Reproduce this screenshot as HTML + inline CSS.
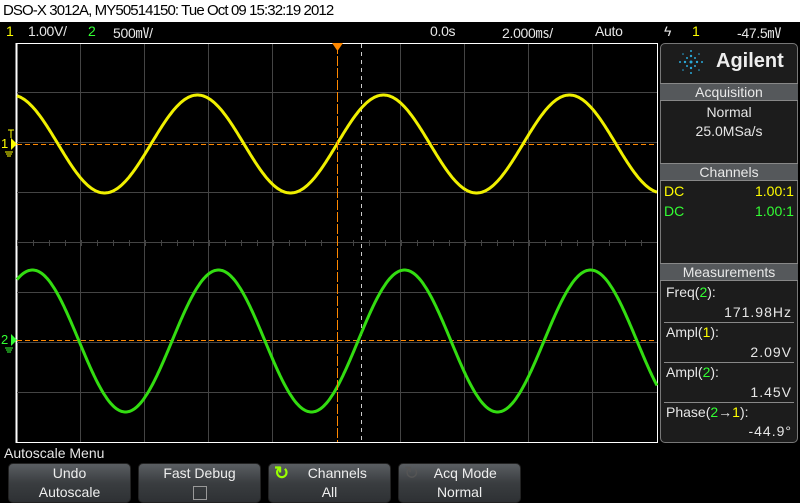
<!DOCTYPE html>
<html><head><meta charset="utf-8"><style>
*{margin:0;padding:0;box-sizing:border-box}
body{width:800px;height:503px;background:#000;position:relative;overflow:hidden;font-family:"Liberation Sans",sans-serif;color:#e6e6e6}
.a{position:absolute;white-space:nowrap}
#hdr{left:0;top:0;width:800px;height:22px;background:#fff;color:#000;font-size:15px;padding:2px 3px;letter-spacing:-0.9px}
.st{font-size:14px;top:23px;letter-spacing:-0.3px}
.panel{position:absolute;left:660px;width:138px;background:#1c1c1c;border:1px solid #777;border-radius:5px}
.ph{position:absolute;left:0;width:100%;height:18px;background:#55585b;border-top:1px solid #888;border-bottom:1px solid #888;text-align:center;font-size:14px;line-height:16px;color:#e8e8e8}
.btn{position:absolute;top:463px;height:40px;width:123px;border-radius:5px;background:linear-gradient(#5a5e62,#3a3d40 50%,#2e3134);border:1px solid #222;text-align:center;font-size:14px;line-height:19px;color:#eee}
.mt{position:absolute;left:6px;font-size:14px}
.mv{position:absolute;right:6px;font-size:14px;letter-spacing:1px}
.sep{position:absolute;left:4px;right:4px;height:1px;background:#888}
</style></head><body>
<div id="hdr" class="a">DSO-X 3012A, MY50514150: Tue Oct 09 15:32:19 2012</div>
<div class="a st" style="left:6px;color:#ff0">1</div>
<div class="a st" style="left:28px">1.00V/</div>
<div class="a st" style="left:88px;color:#3f3">2</div>
<div class="a st" style="left:113px">500㎷/</div>
<div class="a st" style="left:430px">0.0s</div>
<div class="a st" style="left:502px">2.000㎳/</div>
<div class="a st" style="left:595px">Auto</div>
<div class="a st" style="left:664px">ϟ</div>
<div class="a st" style="left:692px;color:#ff0">1</div>
<div class="a st" style="left:737px">-47.5㎷</div>

<svg class="a" style="left:0;top:0" width="800" height="503" id="sv">
<line x1="16.5" y1="43" x2="16.5" y2="443" stroke="#fff" stroke-width="2"/>
<line x1="16" y1="43.5" x2="658" y2="43.5" stroke="#fff"/>
<line x1="16" y1="442.5" x2="658" y2="442.5" stroke="#fff"/>
<line x1="657.5" y1="43" x2="657.5" y2="443" stroke="#fff"/>
<g id="grid" stroke="#444" stroke-width="1"></g>
<line x1="17" y1="144.5" x2="657" y2="144.5" stroke="#f80" stroke-dasharray="5,3"/>
<line x1="17" y1="340.5" x2="657" y2="340.5" stroke="#f80" stroke-dasharray="5,3"/>
<line x1="361.5" y1="44" x2="361.5" y2="442" stroke="#ccc" stroke-dasharray="4,4"/>
<path id="y" fill="none" stroke="#f0f000" stroke-width="3"/>
<path id="g" fill="none" stroke="#33dd11" stroke-width="3"/>
<line x1="337.5" y1="44" x2="337.5" y2="442" stroke="#f80" stroke-dasharray="10,2"/>
<polygon points="332,43 343,43 337.5,51" fill="#f80"/>
<text x="1" y="148" fill="#ff0" font-size="13" font-family="Liberation Sans">1</text>
<polygon points="11,138 17,144 11,150" fill="#ff0"/>
<path d="M8,130h6M11,130v8" stroke="#ff0"/>
<text x="1" y="344" fill="#3f3" font-size="13" font-family="Liberation Sans">2</text>
<polygon points="11,334 17,340 11,346" fill="#3f3"/>
<path d="M5,152h8M6,154h6M7,156h4" stroke="#ff0"/>
<path d="M5,348h8M6,350h6M7,352h4" stroke="#3f3"/>
<g fill="#2aa8d8">
<circle cx="691" cy="62" r="1.5"/><circle cx="691" cy="55" r="1.2"/><circle cx="691" cy="69" r="1.2"/><circle cx="691" cy="51" r="1"/><circle cx="691" cy="73" r="1"/>
<circle cx="684" cy="62" r="1.2"/><circle cx="698" cy="62" r="1.2"/><circle cx="680" cy="62" r="1"/><circle cx="702" cy="62" r="1"/>
<circle cx="686" cy="57" r="1"/><circle cx="696" cy="57" r="1"/><circle cx="686" cy="67" r="1"/><circle cx="696" cy="67" r="1"/>
<circle cx="683" cy="54" r="0.8"/><circle cx="699" cy="54" r="0.8"/><circle cx="683" cy="70" r="0.8"/><circle cx="699" cy="70" r="0.8"/>
</g>
</svg>

<div class="panel" style="top:43px;height:400px"></div>
<svg class="a" style="left:0;top:0" width="800" height="503">
<g fill="#2aa8d8">
<circle cx="691" cy="62" r="1.5"/><circle cx="691" cy="56" r="1.2"/><circle cx="691" cy="68" r="1.2"/><circle cx="691" cy="51" r="1"/><circle cx="691" cy="73" r="1"/>
<circle cx="685" cy="62" r="1.2"/><circle cx="697" cy="62" r="1.2"/><circle cx="680" cy="62" r="1"/><circle cx="702" cy="62" r="1"/>
<circle cx="687" cy="58" r="1"/><circle cx="695" cy="58" r="1"/><circle cx="687" cy="66" r="1"/><circle cx="695" cy="66" r="1"/>
<circle cx="683" cy="54" r="0.8"/><circle cx="699" cy="54" r="0.8"/><circle cx="683" cy="70" r="0.8"/><circle cx="699" cy="70" r="0.8"/>
</g></svg>
<div class="a" style="left:716px;top:50px;font-size:20px;font-weight:bold;color:#eee">Agilent</div>
<div class="ph" style="left:660px;top:83px;width:138px;position:absolute">Acquisition</div>
<div class="a" style="left:660px;width:138px;text-align:center;top:104px;font-size:14px">Normal</div>
<div class="a" style="left:660px;width:138px;text-align:center;top:123px;font-size:14px">25.0MSa/s</div>
<div class="ph" style="left:660px;top:163px;width:138px;position:absolute">Channels</div>
<div class="a" style="left:664px;top:183px;font-size:14px;color:#ff0">DC</div>
<div class="a" style="left:755px;top:183px;font-size:14px;color:#ff0">1.00:1</div>
<div class="a" style="left:664px;top:203px;font-size:14px;color:#3f3">DC</div>
<div class="a" style="left:755px;top:203px;font-size:14px;color:#3f3">1.00:1</div>
<div class="ph" style="left:660px;top:263px;width:138px;position:absolute">Measurements</div>
<div style="position:absolute;left:660px;top:282px;width:138px;height:160px">
<div class="mt" style="top:2px">Freq(<span style="color:#3f3">2</span>):</div>
<div class="mv" style="top:22px">171.98Hz</div><div class="sep" style="top:40px"></div>
<div class="mt" style="top:42px">Ampl(<span style="color:#ff0">1</span>):</div>
<div class="mv" style="top:62px">2.09V</div><div class="sep" style="top:80px"></div>
<div class="mt" style="top:82px">Ampl(<span style="color:#3f3">2</span>):</div>
<div class="mv" style="top:102px">1.45V</div><div class="sep" style="top:120px"></div>
<div class="mt" style="top:122px">Phase(<span style="color:#3f3">2</span>→<span style="color:#ff0">1</span>):</div>
<div class="mv" style="top:141px">-44.9°</div>
</div>

<div class="a" style="left:4px;top:445px;font-size:14px">Autoscale Menu</div>
<div class="btn" style="left:8px">Undo<br>Autoscale</div>
<div class="btn" style="left:138px">Fast Debug<br><span style="display:inline-block;width:14px;height:14px;border:1px solid #999;vertical-align:middle"></span></div>
<div class="btn" style="left:268px">&nbsp;&nbsp;&nbsp;&nbsp;Channels<br>All</div>
<div class="a" style="left:274px;top:463px;color:#9f0;font-size:18px;font-weight:bold">↻</div>
<div class="btn" style="left:398px">&nbsp;&nbsp;&nbsp;Acq Mode<br>Normal</div>
<div class="a" style="left:404px;top:463px;color:#555;font-size:18px">↻</div>
<script>
var g=document.getElementById('grid'),s='';
for(var i=1;i<10;i++){var x=16+64*i+0.5;if(i!=5)s+='<line x1="'+x+'" y1="44" x2="'+x+'" y2="442"/>';}
for(var j=1;j<8;j++){var y=43+50*j-0.5;s+='<line x1="17" y1="'+y+'" x2="657" y2="'+y+'"/>';}
for(var k=17;k<657;k+=16){s+='<line x1="'+(k+0.5)+'" y1="240" x2="'+(k+0.5)+'" y2="246"/>';}
g.innerHTML=s;
function w(id,c,a,x0){var d='';for(var x=17;x<=657;x++){var y=c-a*Math.sin(2*Math.PI*(x-x0)/186);d+=(x==17?'M':'L')+x+','+y.toFixed(1);}document.getElementById(id).setAttribute('d',d);}
w('y',144,49,337);w('g',341,71,358);
</script>
</body></html>
